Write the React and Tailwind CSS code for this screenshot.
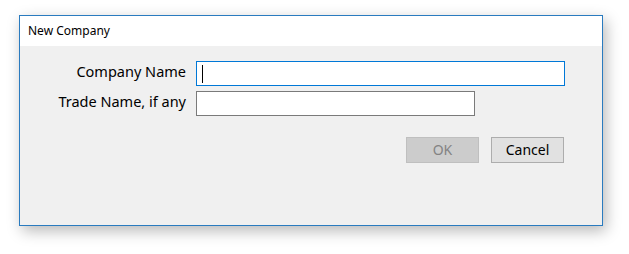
export default function App() {
  return (
    <div className="w-[629px] h-[254px] bg-white pl-[19px] pt-[15px]" style={{ fontFamily: '"Noto Sans", "Open Sans", sans-serif' }}>
      <div className="w-[584px] h-[211px] border border-[#2a7bbf] bg-[#f0f0f0] shadow-[3px_5px_14px_rgba(0,0,0,0.28)] flex flex-col">
        <div className="h-[30px] bg-white flex items-center pl-[8px] text-[12px] text-black leading-none">
          New Company
        </div>
        <div className="flex flex-col pt-[15px]">
          <div className="flex items-center h-[25px]">
            <div className="w-[166px] text-right text-[14.5px] text-black leading-none pb-[4px]">Company Name</div>
            <div className="ml-[10px] w-[369px] h-[25px] border border-[#0078d7] bg-white flex items-center pl-[5px]">
              <div className="w-px h-[18px] bg-black" />
            </div>
          </div>
          <div className="flex items-center h-[25px] mt-[5px]">
            <div className="w-[166px] text-right text-[14.5px] text-black leading-none pb-[4px]">Trade Name, if any</div>
            <div className="ml-[10px] w-[279px] h-[25px] border border-[#7a7a7a] bg-white" />
          </div>
          <div className="flex justify-end mt-[21px] pr-[38px] gap-[12px]">
            <div className="w-[73px] h-[26px] bg-[#cccccc] border border-[#bfbfbf] flex items-center justify-center text-[14px] text-[#838383] leading-none">OK</div>
            <div className="w-[73px] h-[26px] bg-[#e1e1e1] border border-[#adadad] flex items-center justify-center text-[14px] text-black leading-none">Cancel</div>
          </div>
        </div>
      </div>
    </div>
  );
}
